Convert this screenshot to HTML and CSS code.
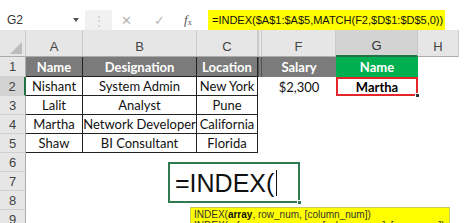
FILE: index.html
```html
<!DOCTYPE html>
<html>
<head>
<meta charset="utf-8">
<link rel="stylesheet" href="styles.css">
</head>
<body>
<div class="app">
  <div class="fbar">
    <div class="namebox"><span>G2</span><span class="dd"></span></div>
    <div class="grip">⋮</div>
    <div class="btns">
      <span class="ic x">✕</span>
      <span class="ic ok">✓</span>
      <span class="ic fx"><i>f</i><sub>x</sub></span>
    </div>
    <div class="formula"><span class="hl">=INDEX($A$1:$A$5,MATCH(F2,$D$1:$D$5,0))</span></div>
  </div>
  <div class="grid">
    <div class="ch corner"><svg width="26" height="27" viewBox="0 0 26 27"><polygon points="10,24 22,24 22,12" fill="#bcbcbc"/></svg></div>
    <div class="ch">A</div><div class="ch">B</div><div class="ch">C</div><div class="ch hid"></div><div class="ch">F</div><div class="ch sel">G</div><div class="ch">H</div>

    <div class="rh">1</div>
    <div class="c t hd">Name</div><div class="c t hd">Designation</div><div class="c t hd">Location</div><div class="c hd hidc"></div><div class="c hd">Salary</div><div class="c gr">Name</div><div class="c"></div>

    <div class="rh rsel">2</div>
    <div class="c t">Nishant</div><div class="c t">System Admin</div><div class="c t">New York</div><div class="c"></div><div class="c">$2,300</div><div class="c red">Martha<span class="handle"></span></div><div class="c"></div>

    <div class="rh">3</div>
    <div class="c t">Lalit</div><div class="c t">Analyst</div><div class="c t">Pune</div><div class="c"></div><div class="c"></div><div class="c"></div><div class="c"></div>

    <div class="rh">4</div>
    <div class="c t">Martha</div><div class="c t">Network Developer</div><div class="c t">California</div><div class="c"></div><div class="c"></div><div class="c"></div><div class="c"></div>

    <div class="rh">5</div>
    <div class="c t">Shaw</div><div class="c t">BI Consultant</div><div class="c t">Florida</div><div class="c"></div><div class="c"></div><div class="c"></div><div class="c"></div>

    <div class="rh">6</div>
    <div class="c"></div><div class="c"></div><div class="c"></div><div class="c"></div><div class="c"></div><div class="c"></div><div class="c"></div>
    <div class="rh">7</div>
    <div class="c"></div><div class="c"></div><div class="c"></div><div class="c"></div><div class="c"></div><div class="c"></div><div class="c"></div>
    <div class="rh">8</div>
    <div class="c"></div><div class="c"></div><div class="c"></div><div class="c"></div><div class="c"></div><div class="c"></div><div class="c"></div>
    <div class="rh last">9</div>
    <div class="c"></div><div class="c"></div><div class="c"></div><div class="c"></div><div class="c"></div><div class="c"></div><div class="c"></div>
  </div>
  <div class="editor">=INDEX(<span class="caret"></span><span class="ehandle"></span></div>
  <div class="tip">
    <div>INDEX(<b>array</b>, row_num, [column_num])</div>
    <div>INDEX(reference, row_num, [column_num], [area_num])</div>
  </div>
</div>
</body>
</html>
```
FILE: styles.css
```css
* { box-sizing: border-box; }
body { margin: 0; background: #fff; font-family: "Lato", "Liberation Sans", sans-serif; }
.app { position: relative; width: 474px; height: 223px; overflow: hidden; background: #fff; padding-top: 10px; }

.fbar { display: flex; height: 20px; width: 459px; background: #fff; }
.namebox { width: 85px; display: flex; align-items: center; justify-content: space-between; padding: 0 6px 0 7px; font-family: "Liberation Sans", sans-serif; font-size: 12px; color: #333; }
.dd { width: 0; height: 0; border-left: 3px solid transparent; border-right: 3px solid transparent; border-top: 4px solid #555; }
.grip { width: 27px; background: #f1f1f1; color: #c8c8c8; font-size: 12px; display: flex; align-items: center; justify-content: center; }
.btns { width: 95px; display: flex; align-items: center; padding-left: 9px; gap: 0; }
.ic { color: #b5b5b5; font-size: 13px; font-family: "DejaVu Sans", sans-serif; }
.x { width: 33px; }
.ok { width: 30px; }
.fx { color: #555; font-family: "Liberation Serif", serif; font-size: 13px; }
.fx sub { font-size: 8px; vertical-align: -1px; }
.formula { flex: 1; padding-left: 1px; display: flex; align-items: stretch; }
.hl { background: #ffff00; padding: 0 4px 0 4px; display: flex; align-items: center; font-family: "Liberation Sans", sans-serif; font-size: 11px; color: #111; width: 237px; }

.grid { display: grid; width: 459px; grid-template-columns: 26px 57px 114px 61px 4px 74px 82px 41px; grid-template-rows: 27px 20px repeat(8, 19px); }
.ch { background: #e6e6e6; border-right: 1px solid #c9c9c9; border-bottom: 1px solid #ababab; display: flex; align-items: center; justify-content: center; padding-top: 6px; font-family: "Liberation Sans", sans-serif; font-size: 13px; color: #444; }
.corner { padding: 0; display: block; }
.ch.hid { border-left: 1px solid #c9c9c9; }
.ch.sel { background: #d3d3d3; border-bottom: 2px solid #217346; color: #333; }
.rh { background: #e6e6e6; border-right: 1px solid #ababab; border-bottom: 1px solid #d0d0d0; display: flex; align-items: center; justify-content: center; font-family: "Liberation Sans", sans-serif; font-size: 13px; color: #444; }
.rh.last { align-items: flex-start; padding-top: 2px; }
.rh.rsel { background: #d3d3d3; border-right: 2px solid #217346; }

.c { display: flex; align-items: center; justify-content: center; font-size: 13px; color: #111; white-space: nowrap; position: relative; }
.c.t { border-right: 1px solid #222; border-bottom: 1px solid #222; }
.hd { background: #7b7b7b; color: #fff; font-weight: bold; }
.hidc { border-left: 1px solid #555; border-right: 1px solid #555; }
.gr { background: #00b050; color: #fff; font-weight: bold; }
.red { border: 2px solid #e3262a; font-weight: bold; color: #000; }
.handle { position: absolute; right: -4px; bottom: -4px; width: 5px; height: 5px; background: #333; border: 1px solid #fff; }

.editor { position: absolute; left: 168px; top: 162px; width: 132px; height: 41px; border: 2px solid #2f7a4f; background: #fff; font-family: "Liberation Sans", sans-serif; font-size: 25px; color: #111; padding-left: 5px; display: flex; align-items: center; padding-top: 1px; }
.caret { display: inline-block; width: 1px; height: 26px; background: #111; margin-left: 2px; }
.ehandle { position: absolute; right: -4px; bottom: -4px; width: 5px; height: 5px; background: #2f7a4f; border: 1px solid #fff; }
.tip { position: absolute; left: 190px; top: 207px; width: 260px; height: 30px; background: #ffff00; border: 1px solid #c8c85a; padding: 1px 0 0 3px; font-family: "Liberation Sans", sans-serif; font-size: 10px; line-height: 11px; color: #333; }
.tip b { color: #111; }
```
